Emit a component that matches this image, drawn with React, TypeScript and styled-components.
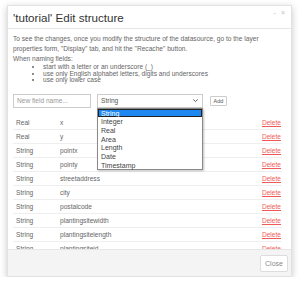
import styled, { createGlobalStyle } from 'styled-components';

const GlobalStyle = createGlobalStyle`
  body {
    margin: 0;
    background: #ffffff;
    font-family: 'Liberation Sans', Arial, sans-serif;
  }
`;

type Field = { type: string; name: string };

const fields: Field[] = [
  { type: 'Real', name: 'x' },
  { type: 'Real', name: 'y' },
  { type: 'String', name: 'pointx' },
  { type: 'String', name: 'pointy' },
  { type: 'String', name: 'streetaddress' },
  { type: 'String', name: 'city' },
  { type: 'String', name: 'postalcode' },
  { type: 'String', name: 'plantingsitewidth' },
  { type: 'String', name: 'plantingsitelength' },
  { type: 'String', name: 'plantingsiteid' },
  { type: 'String', name: 'species' },
  { type: 'String', name: 'commonname' },
  { type: 'Real', name: 'dbh' },
  { type: 'Real', name: 'height' },
  { type: 'String', name: 'condition' },
  { type: 'Date', name: 'plantingdate' },
  { type: 'String', name: 'owner' },
  { type: 'String', name: 'neighbourhood' },
  { type: 'Integer', name: 'treeid' },
  { type: 'String', name: 'genus' },
  { type: 'String', name: 'cultivar' },
  { type: 'Real', name: 'canopywidth' },
  { type: 'String', name: 'ward' },
  { type: 'Date', name: 'lastinspection' },
  { type: 'String', name: 'notes' },
  { type: 'String', name: 'status' },
  { type: 'Integer', name: 'zone' },
  { type: 'String', name: 'landuse' },
  { type: 'String', name: 'source' },
  { type: 'Timestamp', name: 'updated' },
  { type: 'String', name: 'editor' },
];

const types = ['String', 'Integer', 'Real', 'Area', 'Length', 'Date', 'Timestamp'];

const arrowUp =
  "data:image/svg+xml;utf8,<svg xmlns='http://www.w3.org/2000/svg' width='7' height='7'><path d='M1.5 4.5 L3.5 2.5 L5.5 4.5 Z' fill='%23777'/></svg>";
const arrowDown =
  "data:image/svg+xml;utf8,<svg xmlns='http://www.w3.org/2000/svg' width='7' height='7'><path d='M1.5 2.5 L3.5 4.5 L5.5 2.5 Z' fill='%23777'/></svg>";

const App = () => {
  return (
    <Page>
      <GlobalStyle />
      <Dialog>
        <Header>
          <Title>'tutorial' Edit structure</Title>
          <HeaderTools>
            <ToolIcon>-</ToolIcon>
            <ToolIcon>×</ToolIcon>
          </HeaderTools>
        </Header>
        <Body>
          <Note>
            To see the changes, once you modify the structure of the datasource, go to the layer
            properties form, "Display" tab, and hit the "Recache" button.
          </Note>
          <Note>When naming fields:</Note>
          <Rules>
            <li>start with a letter or an underscore (_)</li>
            <li>use only English alphabet letters, digits and underscores</li>
            <li>use only lower case</li>
          </Rules>
          <NewFieldRow>
            <NameInput placeholder="New field name..." />
            <SelectWrap>
              <SelectBox>
                <span>String</span>
                <Chevron viewBox="0 0 8 8">
                  <path d="M1.5 2.8 L4 5.2 L6.5 2.8" fill="none" stroke="#555" strokeWidth="1.1" />
                </Chevron>
              </SelectBox>
              <OptionList>
                {types.map((t, i) => (
                  <OptionItem key={t} $active={i === 0}>
                    {t}
                  </OptionItem>
                ))}
              </OptionList>
            </SelectWrap>
            <AddButton>Add</AddButton>
          </NewFieldRow>
          <FieldTable>
            <tbody>
              {fields.map((f) => (
                <FieldRow key={f.name}>
                  <TypeCell>{f.type}</TypeCell>
                  <NameCell>{f.name}</NameCell>
                  <ActionCell>
                    <DeleteLink href="#">Delete</DeleteLink>
                  </ActionCell>
                </FieldRow>
              ))}
            </tbody>
          </FieldTable>
        </Body>
        <Footer>
          <CloseButton>Close</CloseButton>
        </Footer>
      </Dialog>
    </Page>
  );
};

const Page = styled.div`
  padding: 5px 0 0 7px;
`;

const Dialog = styled.div`
  display: flex;
  flex-direction: column;
  width: 285px;
  height: 272px;
  box-sizing: border-box;
  background: #fff;
  border: 1px solid #e2e2e2;
  box-shadow: 0 2px 7px rgba(0, 0, 0, 0.22);
`;

const Header = styled.div`
  display: flex;
  align-items: center;
  justify-content: space-between;
  height: 22px;
  padding: 0 6px 0 5px;
  border-bottom: 1px solid #e6e6e6;
  flex-shrink: 0;
`;

const Title = styled.div`
  font-size: 11.6px;
  color: #333;
  white-space: nowrap;
`;

const HeaderTools = styled.div`
  display: flex;
  gap: 5px;
  align-self: flex-start;
  padding-top: 3px;
`;

const ToolIcon = styled.span`
  font-size: 7px;
  line-height: 8px;
  color: #bbb;
`;

const Body = styled.div`
  flex: 1;
  overflow-y: scroll;
  padding: 5px 9px 0 5px;

  &::-webkit-scrollbar {
    width: 7px;
  }
  &::-webkit-scrollbar-track {
    background: #f1f1f1;
  }
  &::-webkit-scrollbar-thumb {
    background: #c1c1c1;
  }
  &::-webkit-scrollbar-button:single-button {
    display: block;
    height: 8px;
    background-color: #f1f1f1;
    background-repeat: no-repeat;
    background-position: center;
  }
  &::-webkit-scrollbar-button:single-button:vertical:decrement {
    background-image: url("${arrowUp}");
  }
  &::-webkit-scrollbar-button:single-button:vertical:increment {
    background-image: url("${arrowDown}");
  }
`;

const Note = styled.p`
  margin: 0;
  font-size: 6.6px;
  line-height: 10px;
  color: #666;
`;

const Rules = styled.ul`
  margin: 0;
  padding-left: 30px;
  font-size: 6.6px;
  line-height: 6.5px;
  color: #666;
`;

const NewFieldRow = styled.div`
  display: flex;
  align-items: center;
  margin-top: 10px;
  height: 14px;
`;

const NameInput = styled.input`
  box-sizing: border-box;
  width: 78px;
  height: 14px;
  padding: 0 3px;
  border: 1px solid #ccc;
  font-family: inherit;
  font-size: 6.6px;
  color: #555;
  outline: none;

  &::placeholder {
    color: #999;
  }
`;

const SelectWrap = styled.div`
  position: relative;
  margin-left: 6px;
`;

const SelectBox = styled.div`
  box-sizing: border-box;
  display: flex;
  align-items: center;
  justify-content: space-between;
  width: 106px;
  height: 14px;
  padding: 0 3px;
  border: 1px solid #ccc;
  font-size: 6.6px;
  color: #555;
`;

const Chevron = styled.svg`
  width: 7px;
  height: 7px;
`;

const OptionList = styled.div`
  position: absolute;
  top: 14px;
  left: 0;
  width: 106px;
  box-sizing: border-box;
  background: #fff;
  border: 1px solid #8a8a8a;
  box-shadow: 1px 1px 2px rgba(0, 0, 0, 0.25);
  z-index: 2;
`;

const OptionItem = styled.div<{ $active: boolean }>`
  box-sizing: border-box;
  height: 8.7px;
  line-height: 7.5px;
  padding-left: 2px;
  font-size: 7px;
  color: ${(p) => (p.$active ? '#fff' : '#444')};
  background: ${(p) => (p.$active ? '#1e88f0' : 'transparent')};
  border: ${(p) => (p.$active ? '1px solid #222' : '1px solid transparent')};
`;

const AddButton = styled.button`
  margin-left: 7px;
  width: 17px;
  height: 10px;
  padding: 0;
  border: 1px solid #ccc;
  border-radius: 1px;
  background: #fff;
  font-family: inherit;
  font-size: 5.5px;
  color: #555;
`;

const FieldTable = styled.table`
  width: 100%;
  margin-top: 8px;
  border-collapse: collapse;
  font-size: 6.6px;
  color: #666;
`;

const FieldRow = styled.tr`
  height: 14px;
  border-bottom: 1px solid #eee;
`;

const TypeCell = styled.td`
  width: 44px;
  padding: 0 0 0 3px;
`;

const NameCell = styled.td`
  padding: 0;
`;

const ActionCell = styled.td`
  padding: 0 1px 0 0;
  text-align: right;
`;

const DeleteLink = styled.a`
  color: #f05a5a;
  text-decoration: underline;
`;

const Footer = styled.div`
  display: flex;
  justify-content: flex-end;
  align-items: center;
  height: 26px;
  padding: 0 3px;
  background: #f4f4f4;
  border-top: 1px solid #e6e6e6;
  flex-shrink: 0;
`;

const CloseButton = styled.button`
  width: 28px;
  height: 17px;
  padding: 0;
  border: 1px solid #ddd;
  border-radius: 2px;
  background: #fff;
  font-family: inherit;
  font-size: 7px;
  color: #888;
`;

export default App;
